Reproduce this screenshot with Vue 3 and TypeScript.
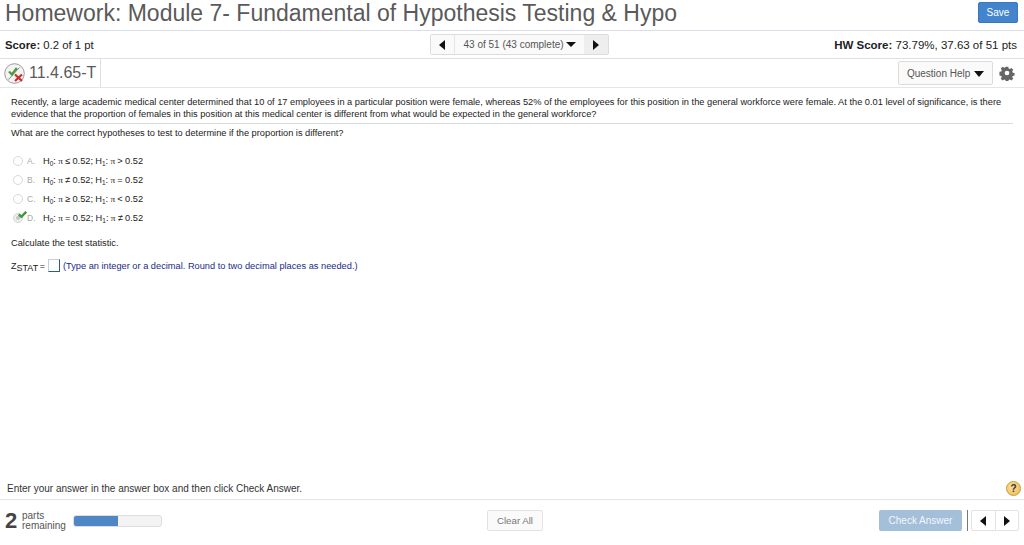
<script setup lang="ts">
const options = [
  { key: 'A.', h0: '≤ 0.52', h1: '> 0.52', picked: false },
  { key: 'B.', h0: '≠ 0.52', h1: '= 0.52', picked: false },
  { key: 'C.', h0: '≥ 0.52', h1: '< 0.52', picked: false },
  { key: 'D.', h0: '= 0.52', h1: '≠ 0.52', picked: true },
]
</script>

<template>
  <div class="page">
    <header class="title-row">
      <h1 class="title">Homework: Module 7- Fundamental of Hypothesis Testing &amp; Hypo</h1>
      <button class="save">Save</button>
    </header>

    <div class="score-row">
      <div class="score"><b>Score:</b> 0.2 of 1 pt</div>
      <div class="pager">
        <span class="pager-arrow"><i class="tri-left"></i></span>
        <span class="pager-label">43 of 51 (43 complete) <i class="tri-down"></i></span>
        <span class="pager-arrow next"><i class="tri-right"></i></span>
      </div>
      <div class="hw"><b>HW Score:</b> 73.79%, 37.63 of 51 pts</div>
    </div>

    <div class="q-row">
      <div class="q-id">
        <svg class="q-icon" width="21" height="21" viewBox="0 0 21 21">
          <circle cx="10.500" cy="10.500" r="9.800" fill="#f4f4f4" stroke="#9a9a9a" stroke-width="1" />
          <path d="M4.500 16.500 L15.500 4.500" stroke="#8a8a8a" stroke-width="1" />
          <path d="M5 8.500 L8 11.500 L12.800 5" fill="none" stroke="#4f9a3a" stroke-width="2.200" />
          <path d="M11 11.500 L18 18 M18 11.500 L11 18" stroke="#cc2b2b" stroke-width="2.200" />
        </svg>
        <span class="q-num">11.4.65-T</span>
      </div>
      <div class="q-tools">
        <button class="help">Question Help <i class="tri-down"></i></button>
        <svg class="gear" width="16" height="16" viewBox="0 0 16 16">
          <path fill="#666" fill-rule="evenodd" d="M6.6 1h2.8l.4 2 1.3.6 1.8-1.1 2 2-1.1 1.8.6 1.3 2 .4v2.8l-2 .4-.6 1.3 1.1 1.8-2 2-1.8-1.1-1.3.6-.4 2H6.6l-.4-2-1.3-.6-1.8 1.1-2-2 1.1-1.8-.6-1.3-2-.4V6.600l2-.4.6-1.3L1.100 3.100l2-2 1.800 1.100 1.300-.6zM8 5.400a2.600 2.600 0 1 0 0 5.200 2.600 2.600 0 0 0 0-5.200z" transform="translate(0.8 0.800) scale(0.9)" />
        </svg>
      </div>
    </div>

    <main class="body">
      <p class="stem">Recently, a large academic medical center determined that 10 of 17 employees in a particular position were female, whereas 52% of the employees for this position in the general workforce were female. At the 0.01 level of significance, is there evidence that the proportion of females in this position at this medical center is different from what would be expected in the general workforce?</p>
      <p class="ask">What are the correct hypotheses to test to determine if the proportion is different?</p>

      <ul class="options">
        <li v-for="o in options" :key="o.key" class="option">
          <span class="radio-wrap">
            <span class="radio" :class="{ on: o.picked }"></span>
            <svg v-if="o.picked" class="tick" width="9" height="7" viewBox="0 0 9 7">
              <path d="M0.800 3.500 L3.300 5.800 L8.200 0.800" fill="none" stroke="#3f9a3a" stroke-width="2.400" />
            </svg>
          </span>
          <span class="opt-key">{{ o.key }}</span>
          <span class="opt-text">H<sub>0</sub>: <span class="pi">π</span> {{ o.h0 }}; H<sub>1</sub>: <span class="pi">π</span> {{ o.h1 }}</span>
        </li>
      </ul>

      <p class="calc">Calculate the test statistic.</p>
      <div class="answer">
        <span class="z">Z<sub>STAT</sub> =</span>
        <span class="box"></span>
        <span class="hint">(Type an integer or a decimal. Round to two decimal places as needed.)</span>
      </div>
    </main>

    <div class="instr">
      <span>Enter your answer in the answer box and then click Check Answer.</span>
      <span class="q-mark">?</span>
    </div>

    <footer class="foot">
      <div class="parts">
        <span class="parts-n">2</span>
        <span class="parts-t">parts<br />remaining</span>
        <span class="bar"><span class="bar-fill" :style="{ width: '50%' }"></span></span>
      </div>
      <button class="clear">Clear All</button>
      <div class="foot-right">
        <button class="check">Check Answer</button>
        <span class="sep"></span>
        <div class="nav">
          <span class="nav-btn"><i class="tri-left"></i></span>
          <span class="nav-btn"><i class="tri-right"></i></span>
        </div>
      </div>
    </footer>
  </div>
</template>

<style>
html, body { margin: 0; background: #fff; }
</style>

<style scoped>
.page {
  width: 1024px;
  height: 545px;
  display: flex;
  flex-direction: column;
  font-family: "Liberation Sans", Arial, sans-serif;
  color: #222;
  overflow: hidden;
  box-sizing: border-box;
}
i { display: inline-block; width: 0; height: 0; }
.tri-left { border-top: 5px solid transparent; border-bottom: 5px solid transparent; border-right: 6px solid #111; }
.tri-right { border-top: 5px solid transparent; border-bottom: 5px solid transparent; border-left: 6px solid #111; }
.tri-down { border-left: 5px solid transparent; border-right: 5px solid transparent; border-top: 6px solid #111; }

.title-row {
  height: 30px;
  border-bottom: 1px solid #dcdfe8;
  display: flex;
  align-items: center;
  justify-content: space-between;
  padding: 0 6px 0 5px;
  flex: none;
}
.title { margin: 0 0 4px; font-size: 23px; font-weight: 400; color: #5a5a5a; white-space: nowrap; }
.save {
  width: 40px; height: 21px; padding: 0; border: 1px solid #3a78bd; border-radius: 2px; margin-bottom: 5px;
  background: #4484cc; color: #fff; font: 10px "Liberation Sans", sans-serif;
}
.score-row {
  height: 27px;
  border-bottom: 1px solid #dcdfe8;
  display: grid;
  grid-template-columns: 1fr auto 1fr;
  align-items: center;
  padding: 0 6px 0 5px;
  flex: none;
  font-size: 11.300px;
  color: #222;
}
.hw { text-align: right; font-size: 11.500px; margin-right: 1px; }
.pager {
  display: flex; height: 21px; width: 179px; margin-left: 15px;
  border: 1px solid #dcdcdc; border-radius: 2px; box-sizing: border-box; align-items: stretch;
}
.pager-arrow { width: 23px; display: flex; align-items: center; justify-content: center; background: #fafafa; flex: none; }
.pager-arrow.next { width: 24px; background: #eeeeee; }
.pager-label { flex: 1; display: flex; align-items: center; gap: 2px; font-size: 10px; color: #555; padding-left: 9px; border-left: 1px solid #e6e6e6; white-space: nowrap; background: #fafafa; }
.pager-label .tri-down { border-left-width: 5px; border-right-width: 5px; border-top-width: 5px; }

.q-row {
  height: 28px;
  border-bottom: 1px solid #e4e6ec;
  display: flex;
  align-items: stretch;
  justify-content: space-between;
  padding: 0 9px 0 4px;
  flex: none;
}
.q-id { display: flex; align-items: center; gap: 4px; width: 96px; border-right: 1px solid #dcdfe8; }
.q-icon { flex: none; }
.q-num { font-size: 16px; color: #5a5a5a; white-space: nowrap; }
.q-tools { display: flex; align-items: center; gap: 6px; }
.help {
  width: 95px; height: 24px; border: 1px solid #dcdcdc; border-radius: 2px; background: #fafafa; padding: 0;
  font: 10px "Liberation Sans", sans-serif; color: #555; white-space: nowrap;
}
.help .tri-down { margin-left: 1px; }

.body { flex: 1; padding: 0 11px; min-height: 0; font-size: 9.250px; color: #222; }
.stem { margin: 8px 0 0; line-height: 12px; padding-bottom: 3px; border-bottom: 1px solid #d8dae2; }
.ask { margin: 3px 0 0; line-height: 12px; }
.options { list-style: none; margin: 12px 0 0; padding: 0; }
.option { height: 19px; display: flex; align-items: center; }
.radio-wrap { width: 14px; height: 12px; position: relative; margin-left: 2px; flex: none; }
.radio { display: block; width: 10px; height: 10px; box-sizing: border-box; border: 1px solid #d8d8d8; border-radius: 50%; background: #fff; margin-top: 1px; }
.radio.on { background: #c4c4c4; box-shadow: inset 0 0 0 2px #f0f0f0; }
.tick { position: absolute; left: 5px; top: -1px; }
.opt-key { width: 16px; flex: none; color: #aaa; font-size: 8.500px; }
.opt-text { color: #222; white-space: nowrap; word-spacing: -0.300px; }
.pi { font-family: "Liberation Serif", serif; }
sub { font-size: 70%; line-height: 0; vertical-align: -2px; }
.calc { margin: 10px 0 0; line-height: 12px; }
.answer { display: flex; align-items: center; margin-top: 9px; height: 15px; }
.z { color: #222; font-size: 9px; white-space: nowrap; word-spacing: -1px; }
.z sub { font-size: 9px; vertical-align: -2px; }
.box { width: 12px; height: 13px; box-sizing: border-box; border: 1px solid #c3d0dc; border-right-color: #2c5d8a; border-bottom-color: #2c5d8a; margin: 0 3px 0 3px; background: #fff; flex: none; }
.hint { color: #1c2a8a; white-space: nowrap; }

.instr {
  height: 24px; display: flex; align-items: center; justify-content: space-between; flex: none;
  padding: 2px 3px 0 7px; border-bottom: 1px solid #e4e6ec; font-size: 10px; color: #333; box-sizing: border-box;
}
.q-mark {
  width: 15px; height: 15px; border-radius: 50%; border: 1px solid #c79a3a; box-sizing: border-box;
  background: radial-gradient(circle at 40% 35%, #fbe29a, #eeb84f); color: #333; font-size: 10px; font-weight: 700; text-align: center; line-height: 13px;
}
.foot {
  height: 45px; flex: none; display: grid; grid-template-columns: 1fr auto 1fr; align-items: start;
  padding: 10px 5px 0 5px; box-sizing: border-box;
}
.parts { display: flex; align-items: center; height: 21px; }
.parts-n { font-size: 22px; font-weight: 700; color: #444; width: 17px; }
.parts-t { font-size: 10px; line-height: 10px; color: #555; width: 52px; margin-right: -1px; }
.bar { width: 89px; height: 12px; border: 1px solid #ddd; border-radius: 3px; background: #f3f3f3; box-sizing: border-box; overflow: hidden; }
.bar-fill { display: block; height: 100%; background: #4f86c6; }
.clear {
  width: 56px; height: 21px; border: 1px solid #e2e2e2; border-radius: 2px; background: #fafafa; padding: 0; margin-left: 6px;
  font: 9.700px "Liberation Sans", sans-serif; color: #777;
}
.foot-right { display: flex; justify-content: flex-end; align-items: center; }
.check {
  width: 83px; height: 21px; border: none; border-radius: 2px; background: #a3bfd9; color: #f4f7fa; padding: 0;
  font: 10px "Liberation Sans", sans-serif;
}
.sep { width: 1px; height: 21px; background: #777; margin: 0 3px 0 5px; }
.nav { display: flex; width: 48px; height: 21px; border: 1px solid #e2e2e2; border-radius: 2px; box-sizing: border-box; }
.nav-btn { flex: 1; display: flex; align-items: center; justify-content: center; }
.nav-btn + .nav-btn { border-left: 1px solid #e2e2e2; }
</style>
